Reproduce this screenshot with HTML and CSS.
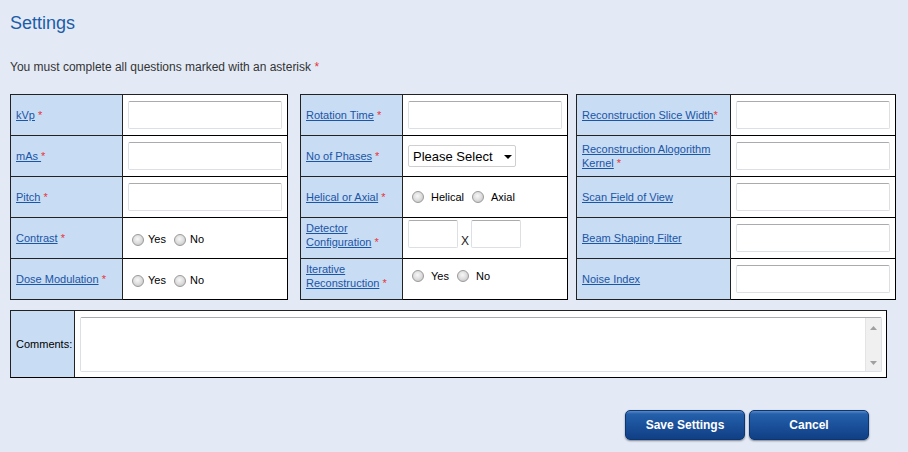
FILE: index.html
```html
<!DOCTYPE html>
<html>
<head>
<meta charset="utf-8">
<title>Settings</title>
<link rel="stylesheet" href="styles.css">
</head>
<body>
<div class="page">
  <h1 class="title">Settings</h1>
  <p class="note">You must complete all questions marked with an asterisk <span class="req">*</span></p>

  <div class="panels">
    <div class="panel panel-a">
      <div class="lbl"><span><a href="#">kVp</a> <span class="req">*</span></span></div>
      <div class="fld"><input class="txt" type="text"></div>
      <div class="lbl"><span><a href="#">mAs </a> <span class="req">*</span></span></div>
      <div class="fld"><input class="txt" type="text"></div>
      <div class="lbl"><span><a href="#">Pitch</a> <span class="req">*</span></span></div>
      <div class="fld"><input class="txt" type="text"></div>
      <div class="lbl"><span><a href="#">Contrast</a> <span class="req">*</span></span></div>
      <div class="fld radios narrow">
        <input class="rad" type="radio" name="contrast"><span class="opt">Yes</span>
        <input class="rad" type="radio" name="contrast"><span class="opt">No</span>
      </div>
      <div class="lbl"><span><a href="#">Dose Modulation</a> <span class="req">*</span></span></div>
      <div class="fld radios narrow">
        <input class="rad" type="radio" name="dose"><span class="opt">Yes</span>
        <input class="rad" type="radio" name="dose"><span class="opt">No</span>
      </div>
    </div>

    <div class="panel panel-b">
      <div class="lbl"><span><a href="#">Rotation Time</a> <span class="req">*</span></span></div>
      <div class="fld"><input class="txt" type="text"></div>
      <div class="lbl"><span><a href="#">No of Phases</a> <span class="req">*</span></span></div>
      <div class="fld">
        <div class="selwrap">
          <select class="sel"><option>Please Select</option></select>
          <svg class="selarrow" width="8" height="4" viewBox="0 0 8 4"><path d="M0 0H8L4 4Z" fill="#000"/></svg>
        </div>
      </div>
      <div class="lbl"><span><a href="#">Helical or Axial</a> <span class="req">*</span></span></div>
      <div class="fld radios wide">
        <input class="rad" type="radio" name="ha"><span class="opt">Helical</span>
        <input class="rad" type="radio" name="ha"><span class="opt">Axial</span>
      </div>
      <div class="lbl up"><span><a href="#">Detector<br>Configuration</a> <span class="req">*</span></span></div>
      <div class="fld detector">
        <input class="txt small" type="text"><span class="times">X</span><input class="txt small" type="text">
      </div>
      <div class="lbl up"><span><a href="#">Iterative<br>Reconstruction</a> <span class="req">*</span></span></div>
      <div class="fld radios wide up">
        <input class="rad" type="radio" name="ir"><span class="opt">Yes</span>
        <input class="rad" type="radio" name="ir"><span class="opt">No</span>
      </div>
    </div>

    <div class="panel panel-c">
      <div class="lbl"><span><a href="#">Reconstruction Slice Width</a><span class="req">*</span></span></div>
      <div class="fld"><input class="txt" type="text"></div>
      <div class="lbl"><span><a href="#">Reconstruction Alogorithm<br>Kernel</a> <span class="req">*</span></span></div>
      <div class="fld"><input class="txt" type="text"></div>
      <div class="lbl"><span><a href="#">Scan Field of View</a></span></div>
      <div class="fld"><input class="txt" type="text"></div>
      <div class="lbl"><span><a href="#">Beam Shaping Filter</a></span></div>
      <div class="fld"><input class="txt" type="text"></div>
      <div class="lbl"><span><a href="#">Noise Index</a></span></div>
      <div class="fld"><input class="txt" type="text"></div>
    </div>
  </div>

  <div class="comments">
    <div class="clbl">Comments:</div>
    <div class="cfld">
      <div class="areawrap">
        <textarea class="area"></textarea>
        <div class="sbar">
          <svg width="7" height="4" viewBox="0 0 7 4"><path d="M0 4L3.5 0L7 4Z" fill="#a0a0a0"/></svg>
          <svg width="7" height="4" viewBox="0 0 7 4"><path d="M0 0H7L3.5 4Z" fill="#a0a0a0"/></svg>
        </div>
      </div>
    </div>
  </div>

  <div class="actions">
    <button class="btn" type="button">Save Settings</button>
    <button class="btn" type="button">Cancel</button>
  </div>
</div>
</body>
</html>
```

FILE: styles.css
```css
html, body {
  margin: 0;
  padding: 0;
}
body {
  background: #e3eaf6;
  font-family: "Liberation Sans", Arial, sans-serif;
  color: #000;
  width: 908px;
  height: 452px;
  overflow: hidden;
}
.page {
  padding: 12px 0 0 10px;
}
.title {
  margin: 0;
  font-size: 18px;
  line-height: 22px;
  font-weight: normal;
  color: #1c5ca8;
}
.note {
  margin: 26px 0 0;
  font-size: 12px;
  line-height: 14px;
  color: #333;
}
.req {
  color: #e8333a;
}
.panels {
  display: flex;
  align-items: flex-start;
  margin-top: 20px;
}
.panel {
  display: grid;
  grid-auto-rows: 41px;
  border-top: 1px solid #222;
  border-left: 1px solid #222;
}
.panel-a {
  grid-template-columns: 112px 165px;
}
.panel-b {
  grid-template-columns: 102px 165px;
  margin-left: 12px;
}
.panel-c {
  grid-template-columns: 154px 165px;
  margin-left: 8px;
}
.lbl {
  box-sizing: border-box;
  background: #c8dcf4;
  border-right: 1px solid #222;
  border-bottom: 1px solid #222;
  display: flex;
  align-items: center;
  padding: 0 5px;
  font-size: 11px;
  line-height: 14px;
  white-space: nowrap;
}
.lbl.up {
  padding-bottom: 6px;
}
.lbl a {
  color: #1a55a6;
  text-decoration: underline;
}
.fld {
  box-sizing: border-box;
  background: #fff;
  border-right: 1px solid #000;
  border-bottom: 1px solid #000;
  display: flex;
  align-items: center;
  padding-left: 5px;
}
.txt {
  box-sizing: border-box;
  width: 154px;
  height: 28px;
  margin: 0;
  padding: 0 4px;
  border: 1px solid #dcdfe4;
  border-top-color: #a9abae;
  border-radius: 2px;
  background: #fff;
  font-family: inherit;
  font-size: 12px;
}
.txt.small {
  width: 50px;
}
.detector {
  align-items: flex-end;
  padding-top: 2px;
  padding-bottom: 10px;
}
.times {
  font-size: 12px;
  line-height: 13px;
  margin: 0 2px 0 3px;
  color: #222;
}
.radios {
  padding-left: 9px;
  font-size: 11px;
  line-height: 13px;
}
.radios.narrow {
  padding-top: 3px;
}
.radios.up {
  padding-bottom: 6px;
}
.rad {
  -webkit-appearance: none;
  appearance: none;
  box-sizing: border-box;
  width: 12px;
  height: 12px;
  margin: 0;
  border: 1px solid #9a9a9a;
  border-radius: 50%;
  background: radial-gradient(circle at 45% 40%, #f7f7f7 0%, #e0e0e0 45%, #bdbdbd 100%);
  flex: none;
}
.narrow .opt {
  margin-left: 4px;
  margin-right: 8px;
}
.wide .opt {
  margin-left: 7px;
  margin-right: 8px;
}
.opt {
  color: #000;
}
.selwrap {
  position: relative;
  width: 108px;
  height: 22px;
}
.sel {
  -webkit-appearance: none;
  appearance: none;
  box-sizing: border-box;
  width: 108px;
  height: 22px;
  margin: 0;
  padding: 0 0 0 4px;
  border: 1px solid #cfcfcf;
  border-radius: 2px;
  background: #fff;
  font-family: inherit;
  font-size: 13px;
  color: #000;
}
.selarrow {
  position: absolute;
  right: 4px;
  top: 10px;
}
.comments {
  display: flex;
  width: 877px;
  height: 68px;
  box-sizing: border-box;
  margin-top: 10px;
  border: 1px solid #000;
  border-left-color: #222;
  border-top-color: #222;
}
.clbl {
  box-sizing: border-box;
  width: 64px;
  background: #c8dcf4;
  border-right: 1px solid #222;
  display: flex;
  align-items: center;
  padding-left: 5px;
  font-size: 11px;
  color: #000;
}
.cfld {
  flex: 1;
  background: #fff;
  display: flex;
  align-items: center;
  padding-left: 5px;
}
.areawrap {
  box-sizing: border-box;
  width: 802px;
  height: 55px;
  display: flex;
  border: 1px solid #dcdfe4;
  border-top-color: #a9abae;
  border-radius: 2px;
}
.area {
  flex: 1;
  border: 0;
  margin: 0;
  padding: 2px;
  resize: none;
  outline: none;
  font-family: inherit;
  font-size: 12px;
  background: #fff;
}
.sbar {
  width: 16px;
  background: #f0f0f0;
  border-left: 1px solid #e4e4e4;
  display: flex;
  flex-direction: column;
  align-items: center;
  justify-content: space-between;
  padding: 8px 0 6px;
  box-sizing: border-box;
}
.actions {
  display: flex;
  justify-content: flex-end;
  gap: 4px;
  width: 859px;
  margin-top: 32px;
}
.btn {
  box-sizing: border-box;
  width: 120px;
  height: 30px;
  margin: 0;
  padding: 0;
  border: 1px solid #0b3672;
  border-radius: 5px;
  background: linear-gradient(#5a88c6 0px, #2560aa 3px, #1b519b 50%, #103f84 100%);
  box-shadow: 0 1px 2px rgba(0, 0, 0, 0.45);
  color: #fff;
  font-family: inherit;
  font-size: 12px;
  font-weight: bold;
  cursor: pointer;
}
```
